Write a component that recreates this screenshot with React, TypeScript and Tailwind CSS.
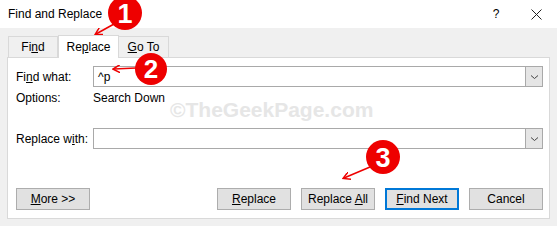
const font = { fontFamily: '"Liberation Sans", Arial, sans-serif' };

function Combo({ value }: { value?: string }) {
  return (
    <div className="flex-1 h-[21px] border border-[#a9a9a9] bg-white flex items-center">
      <div className="flex-1 pl-[4px] text-[12px] text-black">{value}</div>
      <div className="w-[17px] h-[19px] bg-[#e5e5e5] border-l border-[#a9a9a9] flex items-center justify-center">
        <svg width="9" height="6" viewBox="0 0 9 6">
          <path d="M1 1.5 L4.5 4.5 L8 1.5" stroke="#444" strokeWidth="1" fill="none" />
        </svg>
      </div>
    </div>
  );
}

function Btn({ children, primary, className = '' }: { children: React.ReactNode; primary?: boolean; className?: string }) {
  return (
    <div
      className={`h-[22px] w-[74px] flex items-center justify-center text-[12px] text-black bg-[#e1e1e1] ${
        primary ? 'border-2 border-[#0078d7]' : 'border border-[#adadad]'
      } ${className}`}
    >
      {children}
    </div>
  );
}

export default function App() {
  return (
    <div className="relative w-[557px] h-[226px] bg-[#f0f0f0] overflow-hidden" style={font}>
      {/* title bar */}
      <div className="h-[28px] bg-white flex items-center pl-[8px] pr-[15px] text-[12px] text-black">
        <div className="flex-1">Find and Replace</div>
        <div className="w-[20px] text-center mr-[25px]">?</div>
        <svg width="11" height="11" viewBox="0 0 11 11">
          <path d="M0.5 0.5 L10.5 10.5 M10.5 0.5 L0.5 10.5" stroke="#222" strokeWidth="1" />
        </svg>
      </div>

      {/* tabs */}
      <div className="flex items-end h-[29px] pl-[8px]">
        <div className="w-[50px] h-[21px] border border-b-0 border-[#d9d9d9] flex items-center justify-center text-[12px]">
          Fi<u>n</u>d
        </div>
        <div className="relative z-10 w-[61px] h-[23px] bg-white border border-b-0 border-[#d9d9d9] flex items-center justify-center text-[12px] -mb-px">
          Re<u>p</u>lace
        </div>
        <div className="w-[50px] h-[21px] border border-b-0 border-l-0 border-[#d9d9d9] flex items-center justify-center text-[12px]">
          <u>G</u>o To
        </div>
      </div>

      {/* panel */}
      <div className="mx-[7px] h-[162px] bg-white border border-[#d9d9d9] pl-[8px] pr-[6px] pt-[8px] text-[12px] text-black flex flex-col">
        <div className="flex items-center">
          <div className="w-[77px]">Fi<u>n</u>d what:</div>
          <Combo value="^p" />
        </div>
        <div className="flex items-center mt-[2px] h-[17px]">
          <div className="w-[77px]">Options:</div>
          <div>Search Down</div>
        </div>
        <div className="flex items-center mt-[22px]">
          <div className="w-[77px]">Replace w<u>i</u>th:</div>
          <Combo />
        </div>
        <div className="flex items-center mt-[39px]">
          <Btn>
            <span>
              <u>M</u>ore &gt;&gt;
            </span>
          </Btn>
          <div className="flex-1" />
          <Btn className="mr-[10px]">
            <span>
              <u>R</u>eplace
            </span>
          </Btn>
          <Btn className="mr-[10px]">
            <span>
              Replace <u>A</u>ll
            </span>
          </Btn>
          <Btn primary className="mr-[10px]">
            <span>
              <u>F</u>ind Next
            </span>
          </Btn>
          <Btn>Cancel</Btn>
        </div>
      </div>

      {/* watermark */}
      <div className="absolute left-[170px] top-[99px] text-[21px] font-bold text-[#e6e6e6] leading-none pointer-events-none">
        ©TheGeekPage.com
      </div>

      {/* annotations */}
      <svg className="absolute inset-0 pointer-events-none" width="557" height="226" viewBox="0 0 557 226">
        <defs>
          <marker id="ah" markerWidth="8" markerHeight="8" refX="6" refY="4" orient="auto" markerUnits="userSpaceOnUse">
            <path d="M0 0 L7 4 L0 8" stroke="#e00" strokeWidth="1.5" fill="none" />
          </marker>
        </defs>
        <line x1="114" y1="24" x2="96" y2="34" stroke="#e00" strokeWidth="1.5" markerEnd="url(#ah)" />
        <circle cx="125" cy="13" r="17" fill="#ee0000" />
        <text x="125" y="23" textAnchor="middle" fill="#fff" fontSize="27" fontWeight="bold" fontFamily="Liberation Sans, Arial, sans-serif">1</text>

        <line x1="136" y1="68" x2="114" y2="69" stroke="#e00" strokeWidth="1.5" markerEnd="url(#ah)" />
        <circle cx="151" cy="69" r="16" fill="#ee0000" />
        <text x="151" y="78" textAnchor="middle" fill="#fff" fontSize="26" fontWeight="bold" fontFamily="Liberation Sans, Arial, sans-serif">2</text>

        <line x1="370" y1="167" x2="344" y2="178" stroke="#e00" strokeWidth="1.5" markerEnd="url(#ah)" />
        <circle cx="383" cy="157" r="17" fill="#ee0000" />
        <text x="383" y="167" textAnchor="middle" fill="#fff" fontSize="27" fontWeight="bold" fontFamily="Liberation Sans, Arial, sans-serif">3</text>
      </svg>
    </div>
  );
}
